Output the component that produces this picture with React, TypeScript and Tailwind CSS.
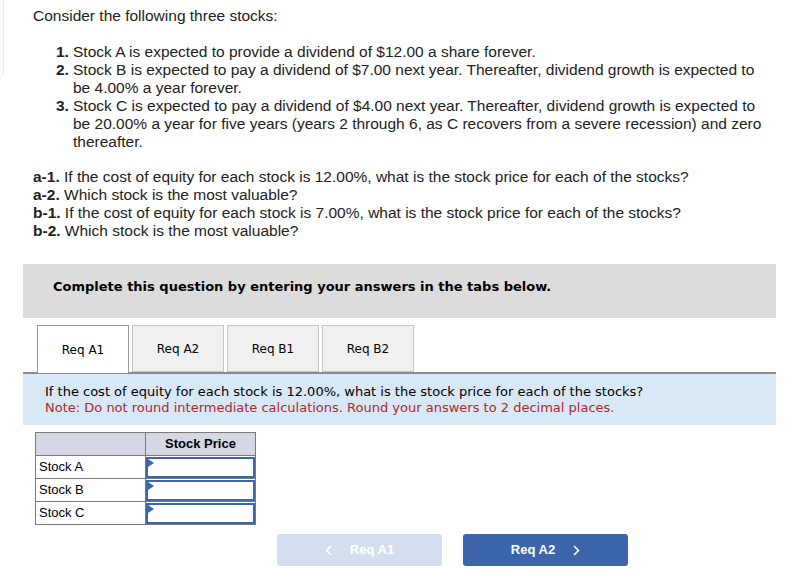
import { useState } from "react";

const body = { fontFamily: '"Liberation Sans", Arial, sans-serif' };
const tahoma = { fontFamily: '"DejaVu Sans", Verdana, sans-serif' };

const tabs = ["Req A1", "Req A2", "Req B1", "Req B2"];
const stocks = ["Stock A", "Stock B", "Stock C"];

function PriceInput() {
  return (
    <div className="relative h-[21px] border-2 border-[#3e64aa] bg-white">
      <span className="absolute left-0 top-0 h-0 w-0 border-y-[4px] border-l-[6px] border-y-transparent border-l-[#3e64aa]" />
      <input className="h-full w-full bg-transparent px-1 text-[13px] outline-none" />
    </div>
  );
}

export default function App() {
  const [active, setActive] = useState(0);

  return (
    <div className="relative min-h-[576px] w-[790px] bg-white text-[#222]" style={body}>
      <div className="absolute -left-3 -top-3 h-[91px] w-[16px] rounded-lg border border-[#ececec]" />

      <div className="pl-[33px] pr-[17px] pt-[7px] text-[15.5px] leading-[18px]">
        <p>Consider the following three stocks:</p>
        <ol className="mt-[18px] ml-[23px]">
          <li className="flex">
            <b className="w-[17px] shrink-0">1.</b>
            <span>Stock A is expected to provide a dividend of $12.00 a share forever.</span>
          </li>
          <li className="flex">
            <b className="w-[17px] shrink-0">2.</b>
            <span>
              Stock B is expected to pay a dividend of $7.00 next year. Thereafter, dividend growth is expected to be
              4.00% a year forever.
            </span>
          </li>
          <li className="flex">
            <b className="w-[17px] shrink-0">3.</b>
            <span>
              Stock C is expected to pay a dividend of $4.00 next year. Thereafter, dividend growth is expected to be
              20.00% a year for five years (years 2 through 6, as C recovers from a severe recession) and zero
              thereafter.
            </span>
          </li>
        </ol>

        <div className="mt-[17px]">
          <p>
            <b>a-1.</b> If the cost of equity for each stock is 12.00%, what is the stock price for each of the stocks?
          </p>
          <p>
            <b>a-2.</b> Which stock is the most valuable?
          </p>
          <p>
            <b>b-1.</b> If the cost of equity for each stock is 7.00%, what is the stock price for each of the stocks?
          </p>
          <p>
            <b>b-2.</b> Which stock is the most valuable?
          </p>
        </div>
      </div>

      <div className="ml-[23px] mr-[14px] mt-[24px]">
        <div className="h-[54px] bg-[#dcdcdc] px-[30px] pt-[14px] leading-[16px]" style={tahoma}>
          <span className="text-[13px] font-bold text-black">
            Complete this question by entering your answers in the tabs below.
          </span>
        </div>

        <div className="mt-[7px] flex gap-[3px] pl-[14px]" style={tahoma}>
          {tabs.map((t, i) => (
            <button
              key={t}
              type="button"
              onClick={() => setActive(i)}
              className={
                i === active
                  ? "relative -mb-px h-[48px] w-[92px] border border-b-0 border-[#9a9a9a] bg-white text-[12px] text-black"
                  : "h-[47px] w-[92px] border border-[#c6c6c6] bg-[#f0f0f0] text-[12px] text-black"
              }
            >
              {t}
            </button>
          ))}
        </div>

        <div
          className="border-t-2 border-[#8c8c8c] bg-[#d9e8f6] px-[22px] pt-[10px] pb-[9px] text-[13px] leading-[16px]"
          style={tahoma}
        >
          <p className="text-black">
            If the cost of equity for each stock is 12.00%, what is the stock price for each of the stocks?
          </p>
          <p className="text-[#b0262a]">
            Note: Do not round intermediate calculations. Round your answers to 2 decimal places.
          </p>
        </div>
      </div>

      <table className="ml-[35px] mt-[7px] border-collapse text-[13px] text-black">
        <thead>
          <tr>
            <th className="h-[23px] w-[110px] border border-[#7a7a7a] bg-[#d3d8e2]" />
            <th className="h-[23px] w-[110px] border border-[#7a7a7a] bg-[#d3d8e2] font-bold">Stock Price</th>
          </tr>
        </thead>
        <tbody>
          {stocks.map((s) => (
            <tr key={s}>
              <td className="h-[23px] border border-[#7a7a7a] px-[3px]">{s}</td>
              <td className="border border-[#7a7a7a] p-0">
                <PriceInput />
              </td>
            </tr>
          ))}
        </tbody>
      </table>

      <div className="ml-[277px] mt-[9px] flex gap-[21px]" style={body}>
        <button
          type="button"
          className="flex h-[32px] w-[165px] items-center justify-center gap-[18px] rounded-[3px] bg-[#d3dfef] text-[13px] font-bold text-white"
        >
          <svg width="7" height="11" viewBox="0 0 7 11" fill="none" stroke="currentColor" strokeWidth="1.6">
            <path d="M6 1 1.5 5.5 6 10" />
          </svg>
          Req A1
        </button>
        <button
          type="button"
          className="flex h-[32px] w-[165px] items-center justify-center gap-[18px] rounded-[3px] bg-[#3d65ab] text-[13px] font-bold text-white"
        >
          Req A2
          <svg width="7" height="11" viewBox="0 0 7 11" fill="none" stroke="currentColor" strokeWidth="1.6">
            <path d="M1 1 5.5 5.5 1 10" />
          </svg>
        </button>
      </div>
    </div>
  );
}
